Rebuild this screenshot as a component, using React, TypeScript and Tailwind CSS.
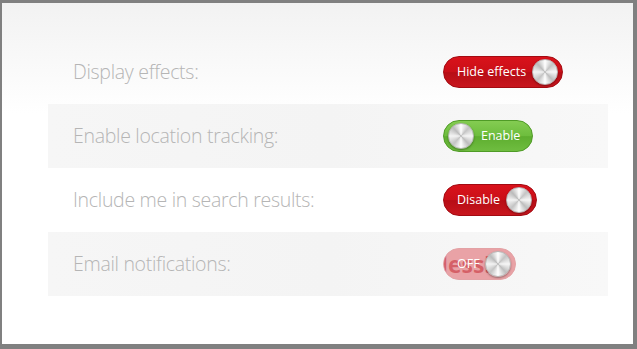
import React from "react";

type Variant = "red" | "green" | "faded";

interface ToggleProps {
  label: string;
  variant: Variant;
  knobLeft?: boolean;
  width: string;
  children?: React.ReactNode;
}

const Knob = () => (
  <span className="relative z-10 h-[26px] w-[26px] shrink-0 rounded-full border border-[#b8b8b8] bg-[conic-gradient(#ffffff,#c4c4c4_12%,#f6f6f6_25%,#bdbdbd_38%,#ffffff_50%,#c4c4c4_62%,#f4f4f4_75%,#bbbbbb_88%,#ffffff)] shadow-[0_1px_2px_rgba(0,0,0,0.35)]" />
);

function Toggle({ label, variant, knobLeft, width, children }: ToggleProps) {
  const skin =
    variant === "green"
      ? "border-[#4f9b26] bg-[linear-gradient(#84cc52,#6dbd3d_50%,#5eae2f_52%,#6fbd40)]"
      : variant === "red"
        ? "border-[#a30b12] bg-[linear-gradient(#d9121b,#ca0f18_50%,#b70d15_52%,#c8161e)]"
        : "border-[#e3a2a5] bg-[#e9a2a6]";

  return (
    <div
      className={`relative flex h-[32px] items-center overflow-hidden rounded-full border ${skin} ${width} ${
        knobLeft ? "pl-[4px]" : "justify-between pr-[4px]"
      }`}
    >
      {children}
      {knobLeft && <Knob />}
      <span
        className={`relative z-10 text-[12.5px] leading-none text-white ${
          knobLeft ? "ml-[7px]" : "ml-[13px]"
        }`}
      >
        {label}
      </span>
      {!knobLeft && <Knob />}
    </div>
  );
}

const Row = ({
  label,
  band,
  children,
}: {
  label: string;
  band?: boolean;
  children: React.ReactNode;
}) => (
  <div
    className={`flex h-[64px] items-center pl-[25px] ${
      band ? "bg-[linear-gradient(90deg,#f6f6f6,#f4f4f4_50%,#f8f8f8)]" : ""
    }`}
  >
    <span className="w-[370px] text-[19.5px] font-light tracking-[-0.3px] text-[#b5b5b5]">
      {label}
    </span>
    {children}
  </div>
);

export default function App() {
  return (
    <div
      className="h-[349px] w-[637px] bg-[#808080] pb-[5px] pl-[2px] pr-[4px] pt-[3px]"
      style={{ fontFamily: "'Open Sans', 'Noto Sans', sans-serif" }}
    >
      <div className="h-full w-full overflow-hidden bg-[linear-gradient(#f2f2f2,#ffffff_110px)]">
        <div className="ml-[46px] mt-[37px] w-[560px]">
          <Row label="Display effects:">
            <Toggle label="Hide effects" variant="red" width="w-[120px]" />
          </Row>
          <Row label="Enable location tracking:" band>
            <Toggle label="Enable" variant="green" knobLeft width="w-[90px]" />
          </Row>
          <Row label="Include me in search results:">
            <Toggle label="Disable" variant="red" width="w-[94px]" />
          </Row>
          <Row label="Email notifications:" band>
            <Toggle label="OFF" variant="faded" width="w-[73px]">
              {/* bleed-through of the "less!" watermark */}
              <span className="absolute left-[-3px] top-[1px] text-[23px] font-bold leading-[28px] text-[#c8343c]/60">
                less!
              </span>
            </Toggle>
          </Row>
        </div>
      </div>
    </div>
  );
}
